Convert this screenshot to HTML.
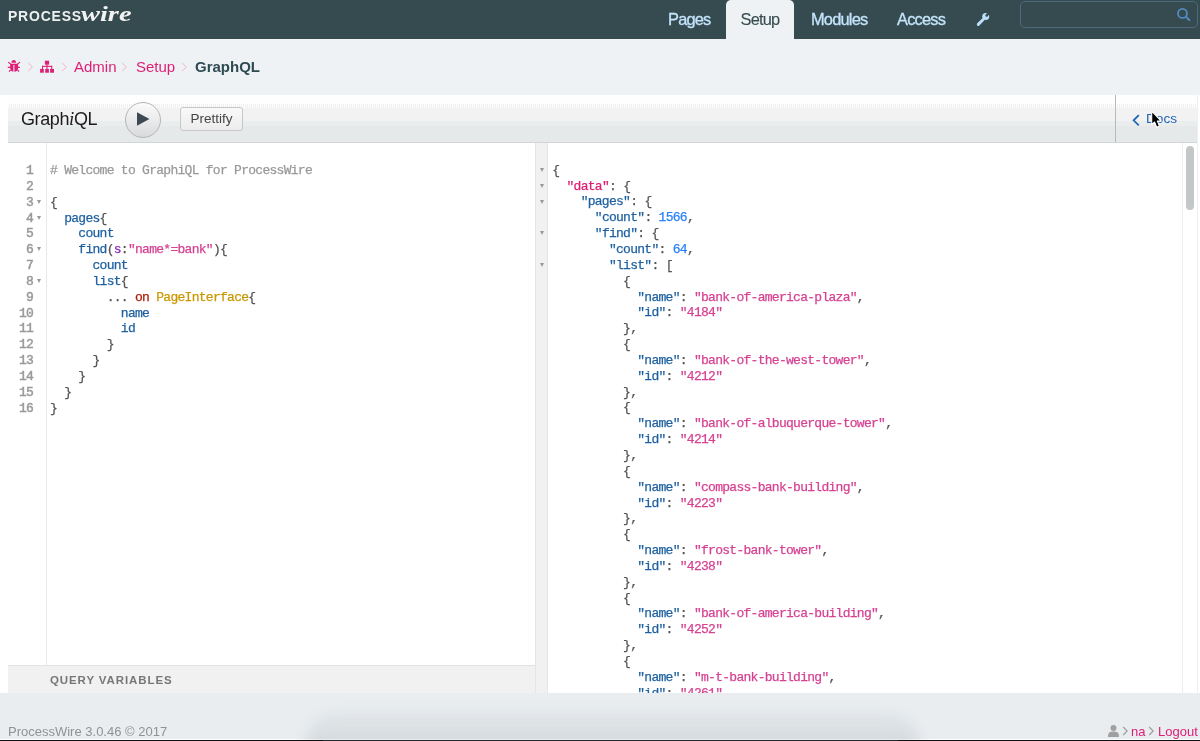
<!DOCTYPE html>
<html><head><meta charset="utf-8">
<style>
*{box-sizing:border-box;}
html,body{margin:0;padding:0;}
body{width:1200px;height:741px;overflow:hidden;position:relative;background:#fff;font-family:"Liberation Sans",sans-serif;}
.abs{position:absolute;}
#hdr{left:0;top:0;width:1200px;height:39px;background:#354b50;}
#logo1{left:8px;top:6px;font-size:15.5px;font-weight:bold;color:#eef0f0;letter-spacing:0.9px;line-height:20px;transform:scaleX(0.9);transform-origin:0 0;}
#logo2{left:81px;top:2px;font-family:"Liberation Serif",serif;font-style:italic;font-weight:bold;font-size:20px;color:#f3f3f3;line-height:24px;transform:scaleX(1.42);transform-origin:0 0;}
.tab{top:0px;height:39px;font-size:16.4px;line-height:39px;color:#c4e4fb;-webkit-text-stroke:0.3px;letter-spacing:-0.8px;}
#tabsetup{left:726px;top:0;padding-top:0px;width:68px;line-height:39px;-webkit-text-stroke:0.1px;background:#eef2f5;border-radius:5px 5px 0 0;color:#354b50;text-align:center;}
#search{left:1020px;top:1px;width:178px;height:27px;border:1px solid #4b6a80;border-radius:5px;}
#crumbs{left:0;top:39px;width:1200px;height:56px;background:#eef2f5;}
.crumb{top:0;font-size:15px;line-height:55px;color:#de1f76;}
.sep{top:0;font-size:15px;line-height:54px;color:#efb3cb;}
#gq{left:8px;top:95px;width:1189px;height:598px;}
#topbar{left:0;top:0;width:1189px;height:48px;border-bottom:1px solid #d2d4d6;
 background:linear-gradient(#fefefe 0px,#fefefe 9px,#f8f8f8 9px,#f8f8f8 13px,#f2f2f2 13px,#f2f2f2 26px,#ebedee 26px,#ebedee 31px,#e6e9ea 31px);}
#title{left:13px;top:0;font-size:18px;line-height:48px;color:#1c1c1c;letter-spacing:-0.4px;}
#exec{left:117px;top:7px;width:36px;height:36px;border-radius:50%;border:1px solid #b5b5b5;background:linear-gradient(#fbfbfb,#d9dadd);}
#prettify{left:172px;top:12px;width:63px;height:24px;border-radius:3px;border:1px solid #c8c8c8;background:linear-gradient(#f9f9f9,#ececec);font-size:13.5px;line-height:21px;text-align:center;color:#464646;}
#docsep{left:1107px;top:0;width:1px;height:47px;background:#b9b9b9;}
#docs{left:1123px;top:0;font-size:13.6px;line-height:48px;color:#2466b5;}
#qed{left:0;top:48px;width:527px;height:522px;background:#fff;overflow:hidden;}
#qgut{left:0;top:0;width:39px;height:522px;border-right:1px solid #e6e8e9;}
.code{font-family:"Liberation Mono",monospace;font-size:13px;letter-spacing:-0.72px;white-space:pre;-webkit-text-stroke:0.25px;}
.l{height:15.85px;line-height:15.85px;}
#qnums{left:0;top:20px;width:25.2px;text-align:right;color:#999;-webkit-text-stroke:0.45px;letter-spacing:-0.72px;}
#qfold{left:29.2px;top:20px;width:10px;color:#999;font-size:9px;}
#qlines{left:42px;top:20px;}
#qvars{left:0;top:570px;width:527px;height:28px;background:#f1f1f1;border-top:1px solid #e0e2e3;}
#qvt{left:42px;top:0;font-size:11.5px;font-weight:bold;color:#777;letter-spacing:0.9px;line-height:28px;}
#rgut{left:527px;top:48px;width:13px;height:550px;background:#f1f1f1;border-left:1px solid #e3e5e6;border-right:1px solid #e3e5e6;}
#rfold{left:4px;top:20px;width:10px;color:#999;font-size:9px;}
#rlines{left:4.3px;top:19.8px;}
#rres{left:540px;top:48px;width:649px;height:550px;overflow:hidden;}
#sbline{left:1174px;top:48px;width:1px;height:550px;background:#eeeeee;}
#sbar{left:1178px;top:51px;width:8px;height:64px;border-radius:4px;background:#c4c7c8;}
#rborder{left:1197px;top:95px;width:1px;height:598px;background:#efefef;}
#foot{left:0;top:693px;width:1200px;height:48px;background:#e9edf0;}
#ftxt{left:8px;top:0;font-size:13px;line-height:78px;color:#929292;}
.fuser{top:0;font-size:13px;line-height:78px;color:#de1f76;}
.tri{display:inline-block;width:0;height:0;border-left:2.5px solid transparent;border-right:2.5px solid transparent;border-top:4.3px solid #999;vertical-align:top;margin-top:5px;}
#blk{left:0;top:740px;width:1200px;height:1px;background:#111;}
</style></head>
<body><div id="wrap" style="position:absolute;left:0;top:0;width:1200px;height:741px;will-change:transform">
<div id="hdr" class="abs">
 <div id="logo1" class="abs">PROCESS</div>
 <div id="logo2" class="abs">wire</div>
 <div class="abs tab" style="left:668px">Pages</div>
 <div id="tabsetup" class="abs tab">Setup</div>
 <div class="abs tab" style="left:811px">Modules</div>
 <div class="abs tab" style="left:897px">Access</div>
 <svg class="abs" style="left:972px;top:8px" width="22" height="22" viewBox="0 0 22 22"><path d="M6.3 16.4 L11.2 11.5" stroke="#bde0fa" stroke-width="2.9" stroke-linecap="round"/><circle cx="13.7" cy="8.5" r="3.5" fill="#bde0fa"/><path d="M14.9 7.2 L17.8 4.3" stroke="#354b50" stroke-width="2.4" stroke-linecap="round"/><circle cx="14.7" cy="7.4" r="1.25" fill="#354b50"/></svg>
 <div id="search" class="abs"></div>
 <svg class="abs" style="left:1177px;top:7px" width="15" height="15" viewBox="0 0 15 15"><circle cx="5.5" cy="6.4" r="4.5" fill="none" stroke="#538ac0" stroke-width="1.8"/><path d="M8.9 9.8 L12.3 13" stroke="#538ac0" stroke-width="2" stroke-linecap="round"/></svg>
</div>
<div id="crumbs" class="abs">
 <svg class="abs" style="left:7px;top:20px" width="14" height="14" viewBox="0 0 14 14"><g fill="#de1f76"><path d="M4.5 3.8 Q4.5 1.1 6.8 1.1 Q9 1.1 9 3.8 Z"/><path d="M3.1 4.8 H11.1 V8.3 Q11.1 12.8 7.1 12.8 Q3.1 12.8 3.1 8.3 Z"/></g><path d="M1.3 3.1 L3.6 5.1 M12.9 3.1 L10.6 5.1 M0.8 8.3 H3.2 M11 8.3 H12.9 M3.6 10.9 L2.1 12.7 M10.6 10.9 L11.9 12.7" stroke="#de1f76" stroke-width="1.2"/><rect x="6.4" y="6" width="1" height="7" fill="#eef2f5"/></svg>
 <svg class="abs" style="left:27px;top:23px" width="7" height="10" viewBox="0 0 7 10"><path d="M1.2 1 L5.4 5 L1.2 9" stroke="#f0b5cc" stroke-width="1" fill="none"/></svg>
 <svg class="abs" style="left:38px;top:19px" width="18" height="18" viewBox="0 0 18 18"><g fill="#de1f76"><rect x="6.9" y="2.7" width="4.2" height="3.9"/><rect x="8.5" y="6" width="1" height="2.5"/><rect x="4" y="7.8" width="10.2" height="1.1"/><rect x="4" y="7.8" width="1" height="3.5"/><rect x="13.2" y="7.8" width="1" height="3.5"/><rect x="8.5" y="7.8" width="1" height="3.5"/><rect x="2.1" y="10.9" width="3.7" height="3.8"/><rect x="7.2" y="10.9" width="3.7" height="3.8"/><rect x="12.1" y="10.9" width="3.9" height="3.8"/></g></svg>
 <svg class="abs" style="left:61.0px;top:23px" width="7" height="10" viewBox="0 0 7 10"><path d="M1.2 1 L5.4 5 L1.2 9" stroke="#f0b5cc" stroke-width="1" fill="none"/></svg>
 <div class="abs crumb" style="left:74px">Admin</div>
 <svg class="abs" style="left:121.0px;top:23px" width="7" height="10" viewBox="0 0 7 10"><path d="M1.2 1 L5.4 5 L1.2 9" stroke="#f0b5cc" stroke-width="1" fill="none"/></svg>
 <div class="abs crumb" style="left:136px">Setup</div>
 <svg class="abs" style="left:181.0px;top:23px" width="7" height="10" viewBox="0 0 7 10"><path d="M1.2 1 L5.4 5 L1.2 9" stroke="#f0b5cc" stroke-width="1" fill="none"/></svg>
 <div class="abs crumb" style="left:195px;font-weight:bold;color:#2f4a52">GraphQL</div>
</div>
<div id="gq" class="abs">
 <div id="topbar" class="abs">
  <div class="abs" style="left:0;top:9px;width:1189px;height:4px;background:repeating-linear-gradient(90deg,#fdfdfd 0 1px,#f0f0f0 1px 2px)"></div>
  <div class="abs" style="left:0;top:26px;width:1189px;height:5px;background:#eaedee"></div>
  <div id="title" class="abs">Graph<i style="font-family:'Liberation Serif',serif;font-size:19px">i</i>QL</div>
  <div id="exec" class="abs"><svg class="abs" style="left:10px;top:8px" width="14" height="16" viewBox="0 0 14 16"><path d="M1 1.2 L13.4 8 L1 14.8 Z" fill="#3c4852"/></svg></div>
  <div id="prettify" class="abs">Prettify</div>
  <div id="docsep" class="abs"></div>
  <svg class="abs" style="left:1123px;top:19px" width="10" height="13" viewBox="0 0 10 13"><path d="M7.8 1.2 L2.6 6.3 L7.8 11.4" stroke="#2466b5" stroke-width="1.8" fill="none"/></svg>
  <div id="docs" class="abs" style="left:1138px">Docs</div>
  <svg class="abs" style="left:1141px;top:15px" width="16" height="21" viewBox="0 0 16 21"><path d="M2.7 1.1 L2.7 14.7 L5.6 12 L7.6 17.2 L10.4 16.1 L8.4 11.1 L12.2 11.1 Z" fill="#000" stroke="#fff" stroke-width="1.1" stroke-linejoin="round"/></svg>
 </div>
 <div id="qed" class="abs">
  <div id="qgut" class="abs"></div>
  <div id="qnums" class="abs code"><div class="l">1</div><div class="l">2</div><div class="l">3</div><div class="l">4</div><div class="l">5</div><div class="l">6</div><div class="l">7</div><div class="l">8</div><div class="l">9</div><div class="l">10</div><div class="l">11</div><div class="l">12</div><div class="l">13</div><div class="l">14</div><div class="l">15</div><div class="l">16</div></div>
  <div id="qfold" class="abs code" style="font-size:9px;letter-spacing:0"><div class="l"></div><div class="l"></div><div class="l"><b class="tri"></b></div><div class="l"><b class="tri"></b></div><div class="l"></div><div class="l"><b class="tri"></b></div><div class="l"></div><div class="l"><b class="tri"></b></div><div class="l"></div><div class="l"></div><div class="l"></div><div class="l"></div><div class="l"></div><div class="l"></div><div class="l"></div><div class="l"></div></div>
  <div id="qlines" class="abs code"><div class="l"><span style="color:#999"># Welcome to GraphiQL for ProcessWire</span></div><div class="l"></div><div class="l"><span style="color:#555">{</span></div><div class="l"><span style="color:#555">  </span><span style="color:#1F61A0">pages</span><span style="color:#555">{</span></div><div class="l"><span style="color:#555">    </span><span style="color:#1F61A0">count</span></div><div class="l"><span style="color:#555">    </span><span style="color:#1F61A0">find</span><span style="color:#555">(</span><span style="color:#8B2BB9">s</span><span style="color:#555">:</span><span style="color:#D64292">&quot;name*=bank&quot;</span><span style="color:#555">)</span><span style="color:#555">{</span></div><div class="l"><span style="color:#555">      </span><span style="color:#1F61A0">count</span></div><div class="l"><span style="color:#555">      </span><span style="color:#1F61A0">list</span><span style="color:#555">{</span></div><div class="l"><span style="color:#555">        </span><span style="color:#555">...</span><span style="color:#555"> </span><span style="color:#B11A04">on</span><span style="color:#555"> </span><span style="color:#CA9800">PageInterface</span><span style="color:#555">{</span></div><div class="l"><span style="color:#555">          </span><span style="color:#1F61A0">name</span></div><div class="l"><span style="color:#555">          </span><span style="color:#1F61A0">id</span></div><div class="l"><span style="color:#555">        }</span></div><div class="l"><span style="color:#555">      }</span></div><div class="l"><span style="color:#555">    }</span></div><div class="l"><span style="color:#555">  }</span></div><div class="l"><span style="color:#555">}</span></div></div>
 </div>
 <div id="qvars" class="abs"><div id="qvt" class="abs">QUERY VARIABLES</div></div>
 <div id="rres" class="abs"><div id="rlines" class="abs code"><div class="l"><span style="color:#555">{</span></div><div class="l"><span style="color:#555">  </span><span style="color:#DC1F72">&quot;data&quot;</span><span style="color:#555">: </span><span style="color:#555">{</span></div><div class="l"><span style="color:#555">    </span><span style="color:#1F61A0">&quot;pages&quot;</span><span style="color:#555">: </span><span style="color:#555">{</span></div><div class="l"><span style="color:#555">      </span><span style="color:#1F61A0">&quot;count&quot;</span><span style="color:#555">: </span><span style="color:#2882F9">1566</span><span style="color:#555">,</span></div><div class="l"><span style="color:#555">      </span><span style="color:#1F61A0">&quot;find&quot;</span><span style="color:#555">: </span><span style="color:#555">{</span></div><div class="l"><span style="color:#555">        </span><span style="color:#1F61A0">&quot;count&quot;</span><span style="color:#555">: </span><span style="color:#2882F9">64</span><span style="color:#555">,</span></div><div class="l"><span style="color:#555">        </span><span style="color:#1F61A0">&quot;list&quot;</span><span style="color:#555">: </span><span style="color:#555">[</span></div><div class="l"><span style="color:#555">          {</span></div><div class="l"><span style="color:#555">            </span><span style="color:#1F61A0">&quot;name&quot;</span><span style="color:#555">: </span><span style="color:#D64292">&quot;bank-of-america-plaza&quot;</span><span style="color:#555">,</span></div><div class="l"><span style="color:#555">            </span><span style="color:#1F61A0">&quot;id&quot;</span><span style="color:#555">: </span><span style="color:#D64292">&quot;4184&quot;</span></div><div class="l"><span style="color:#555">          },</span></div><div class="l"><span style="color:#555">          {</span></div><div class="l"><span style="color:#555">            </span><span style="color:#1F61A0">&quot;name&quot;</span><span style="color:#555">: </span><span style="color:#D64292">&quot;bank-of-the-west-tower&quot;</span><span style="color:#555">,</span></div><div class="l"><span style="color:#555">            </span><span style="color:#1F61A0">&quot;id&quot;</span><span style="color:#555">: </span><span style="color:#D64292">&quot;4212&quot;</span></div><div class="l"><span style="color:#555">          },</span></div><div class="l"><span style="color:#555">          {</span></div><div class="l"><span style="color:#555">            </span><span style="color:#1F61A0">&quot;name&quot;</span><span style="color:#555">: </span><span style="color:#D64292">&quot;bank-of-albuquerque-tower&quot;</span><span style="color:#555">,</span></div><div class="l"><span style="color:#555">            </span><span style="color:#1F61A0">&quot;id&quot;</span><span style="color:#555">: </span><span style="color:#D64292">&quot;4214&quot;</span></div><div class="l"><span style="color:#555">          },</span></div><div class="l"><span style="color:#555">          {</span></div><div class="l"><span style="color:#555">            </span><span style="color:#1F61A0">&quot;name&quot;</span><span style="color:#555">: </span><span style="color:#D64292">&quot;compass-bank-building&quot;</span><span style="color:#555">,</span></div><div class="l"><span style="color:#555">            </span><span style="color:#1F61A0">&quot;id&quot;</span><span style="color:#555">: </span><span style="color:#D64292">&quot;4223&quot;</span></div><div class="l"><span style="color:#555">          },</span></div><div class="l"><span style="color:#555">          {</span></div><div class="l"><span style="color:#555">            </span><span style="color:#1F61A0">&quot;name&quot;</span><span style="color:#555">: </span><span style="color:#D64292">&quot;frost-bank-tower&quot;</span><span style="color:#555">,</span></div><div class="l"><span style="color:#555">            </span><span style="color:#1F61A0">&quot;id&quot;</span><span style="color:#555">: </span><span style="color:#D64292">&quot;4238&quot;</span></div><div class="l"><span style="color:#555">          },</span></div><div class="l"><span style="color:#555">          {</span></div><div class="l"><span style="color:#555">            </span><span style="color:#1F61A0">&quot;name&quot;</span><span style="color:#555">: </span><span style="color:#D64292">&quot;bank-of-america-building&quot;</span><span style="color:#555">,</span></div><div class="l"><span style="color:#555">            </span><span style="color:#1F61A0">&quot;id&quot;</span><span style="color:#555">: </span><span style="color:#D64292">&quot;4252&quot;</span></div><div class="l"><span style="color:#555">          },</span></div><div class="l"><span style="color:#555">          {</span></div><div class="l"><span style="color:#555">            </span><span style="color:#1F61A0">&quot;name&quot;</span><span style="color:#555">: </span><span style="color:#D64292">&quot;m-t-bank-building&quot;</span><span style="color:#555">,</span></div><div class="l"><span style="color:#555">            </span><span style="color:#1F61A0">&quot;id&quot;</span><span style="color:#555">: </span><span style="color:#D64292">&quot;4261&quot;</span></div><div class="l"><span style="color:#555">          },</span></div></div></div>
 <div id="rgut" class="abs"><div id="rfold" class="abs code" style="font-size:9px;letter-spacing:0"><div class="l"><b class="tri"></b></div><div class="l"><b class="tri"></b></div><div class="l"><b class="tri"></b></div><div class="l"></div><div class="l"><b class="tri"></b></div><div class="l"></div><div class="l"><b class="tri"></b></div><div class="l"></div><div class="l"></div><div class="l"></div><div class="l"></div><div class="l"></div><div class="l"></div><div class="l"></div><div class="l"></div><div class="l"></div><div class="l"></div><div class="l"></div><div class="l"></div><div class="l"></div><div class="l"></div><div class="l"></div><div class="l"></div><div class="l"></div><div class="l"></div><div class="l"></div><div class="l"></div><div class="l"></div><div class="l"></div><div class="l"></div><div class="l"></div><div class="l"></div><div class="l"></div><div class="l"></div><div class="l"></div></div></div>
 <div id="sbline" class="abs"></div>
 <div id="sbar" class="abs"></div>
</div>
<div id="rborder" class="abs"></div>
<div id="foot" class="abs">
 <div id="ftxt" class="abs">ProcessWire 3.0.46 &copy; 2017</div>
 <svg class="abs" style="left:1108px;top:32px" width="11" height="12" viewBox="0 0 11 12"><circle cx="5.5" cy="3" r="3" fill="#a0a0a0"/><path d="M0 12 C0 7 2 6.5 5.5 6.5 C9 6.5 11 7 11 12 Z" fill="#a0a0a0"/></svg>
 <svg class="abs" style="left:1121.5px;top:33px" width="7" height="10" viewBox="0 0 7 10"><path d="M1.2 1 L5.2 5 L1.2 9" stroke="#9d9d9d" stroke-width="1.1" fill="none"/></svg>
 <div class="abs fuser" style="left:1131px">na</div>
 <svg class="abs" style="left:1148px;top:33px" width="7" height="10" viewBox="0 0 7 10"><path d="M1.2 1 L5.2 5 L1.2 9" stroke="#9d9d9d" stroke-width="1.1" fill="none"/></svg>
 <div class="abs fuser" style="left:1158px">Logout</div>
</div>
<div class="abs" style="left:0;top:739px;width:1200px;height:1px;background:#fbfdfe"></div>
<div class="abs" style="left:0;top:693px;width:1200px;height:47px;overflow:hidden"><div class="abs" style="left:305px;top:20px;width:615px;height:70px;border-radius:45px;background:linear-gradient(rgba(20,30,40,0.035),rgba(20,30,40,0.09) 45%,rgba(20,30,40,0.12));filter:blur(7px)"></div></div>
<div id="blk" class="abs"></div>
<div class="abs" style="left:323px;top:740px;width:575px;height:1px;background:#23292c"></div>
</div></body></html>
